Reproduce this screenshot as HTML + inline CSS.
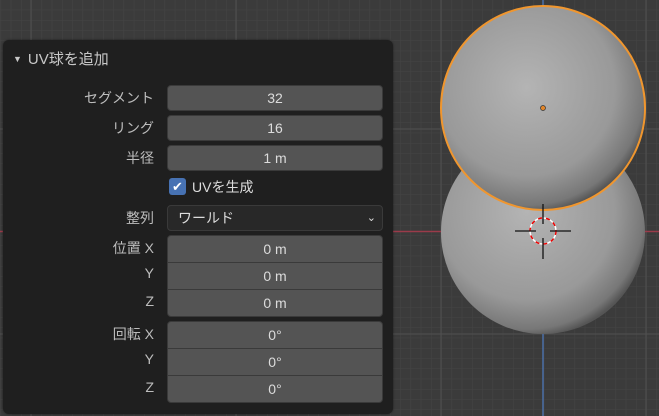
<!DOCTYPE html>
<html><head><meta charset="utf-8"><style>
body{margin:0;width:659px;height:416px;overflow:hidden;background:#3b3b3b;font-family:"Liberation Sans","Noto Sans CJK JP",sans-serif;position:relative}
svg.bg{position:absolute;left:0;top:0}
.panel{position:absolute;left:3px;top:40px;width:390px;height:374px;background:#1f1f1f;border-radius:6px;box-shadow:0 0 2px rgba(0,0,0,.5)}
.title{position:absolute;left:10px;top:8px;color:#c8c8c8;font-size:15px}
.title span{font-size:9px;margin-right:6px;position:relative;top:-2px}
.lbl{position:absolute;right:239px;color:#bdbdbd;font-size:14px;text-align:right;white-space:nowrap}
.f{position:absolute;left:164px;width:216px;background:#545454;color:#dcdcdc;font-size:14px;text-align:center;box-sizing:border-box;border:1px solid #3a3a3a}
</style></head><body>
<svg class="bg" width="659" height="416">
<defs>
<pattern id="g" x="0.5" y="-0.5" width="10.25" height="10.25" patternUnits="userSpaceOnUse"><path d="M0 0H10.25M0 0V10.25" stroke="#444" stroke-width="1" fill="none"/></pattern>
<radialGradient id="s1" cx="0.42" cy="0.4" r="0.62"><stop offset="0" stop-color="#b4b4b4"/><stop offset="0.7" stop-color="#999"/><stop offset="0.93" stop-color="#777"/><stop offset="1" stop-color="#555"/></radialGradient>
</defs>
<rect width="659" height="416" fill="#3b3b3b"/>
<rect width="659" height="416" fill="url(#g)"/>
<g stroke="#505050"><line x1="31" y1="0" x2="31" y2="416"/><line x1="236" y1="0" x2="236" y2="416"/><line x1="441" y1="0" x2="441" y2="416"/><line x1="646" y1="0" x2="646" y2="416"/><line x1="0" y1="129" x2="659" y2="129"/><line x1="0" y1="334" x2="659" y2="334"/></g>
<line x1="0" y1="231.5" x2="659" y2="231.5" stroke="#9a3b4a" stroke-width="1.5"/>
<line x1="543" y1="0" x2="543" y2="416" stroke="#4a6fa8" stroke-width="1.5"/>
<circle cx="543" cy="232" r="102" fill="url(#s1)"/>
<circle cx="543" cy="108" r="102" fill="url(#s1)"/>
<circle cx="543" cy="108" r="102" fill="none" stroke="#f0962e" stroke-width="2"/>
<circle cx="543" cy="108" r="2.5" fill="#e0852a" stroke="#333" stroke-width="0.7"/>
<circle cx="543" cy="231" r="13" fill="none" stroke="#fff" stroke-width="1.5"/>
<circle cx="543" cy="231" r="13" fill="none" stroke="#e00" stroke-width="1.5" stroke-dasharray="4 4"/>
<g stroke="#111" stroke-width="1.3"><line x1="515" y1="231" x2="536" y2="231"/><line x1="550" y1="231" x2="571" y2="231"/><line x1="543" y1="204" x2="543" y2="224"/><line x1="543" y1="238" x2="543" y2="259"/></g>
</svg>
<div class="panel">
<div class="title"><span>▼</span>UV球を追加</div>
<div class="lbl" style="top:48px">セグメント</div><div class="f" style="top:45px;height:26px;line-height:24px;border-radius:4px">32</div>
<div class="lbl" style="top:78px">リング</div><div class="f" style="top:75px;height:26px;line-height:24px;border-radius:4px">16</div>
<div class="lbl" style="top:108px">半径</div><div class="f" style="top:105px;height:26px;line-height:24px;border-radius:4px">1 m</div>
<div style="position:absolute;left:166px;top:138px;width:17px;height:17px;background:#4772b3;border-radius:3px;color:#fff;font-size:13px;line-height:17px;text-align:center">✔</div>
<div style="position:absolute;left:189px;top:137px;color:#dcdcdc;font-size:14px">UVを生成</div>
<div class="lbl" style="top:168px">整列</div><div class="f" style="top:165px;height:26px;line-height:24px;border-radius:4px;background:#282828;text-align:left;padding-left:10px">ワールド<span style="position:absolute;right:6px;top:0;font-size:11px">⌄</span></div>
<div class="lbl" style="top:198px">位置 X</div><div class="f" style="top:195px;height:28px;line-height:26px;border-radius:4px 4px 0 0">0 m</div>
<div class="lbl" style="top:225px">Y</div><div class="f" style="top:222px;height:28px;line-height:26px">0 m</div>
<div class="lbl" style="top:253px">Z</div><div class="f" style="top:249px;height:28px;line-height:26px;border-radius:0 0 4px 4px">0 m</div>
<div class="lbl" style="top:284px">回転 X</div><div class="f" style="top:281px;height:28px;line-height:26px;border-radius:4px 4px 0 0">0°</div>
<div class="lbl" style="top:311px">Y</div><div class="f" style="top:308px;height:28px;line-height:26px">0°</div>
<div class="lbl" style="top:339px">Z</div><div class="f" style="top:335px;height:28px;line-height:26px;border-radius:0 0 4px 4px">0°</div>
</div>
</body></html>
